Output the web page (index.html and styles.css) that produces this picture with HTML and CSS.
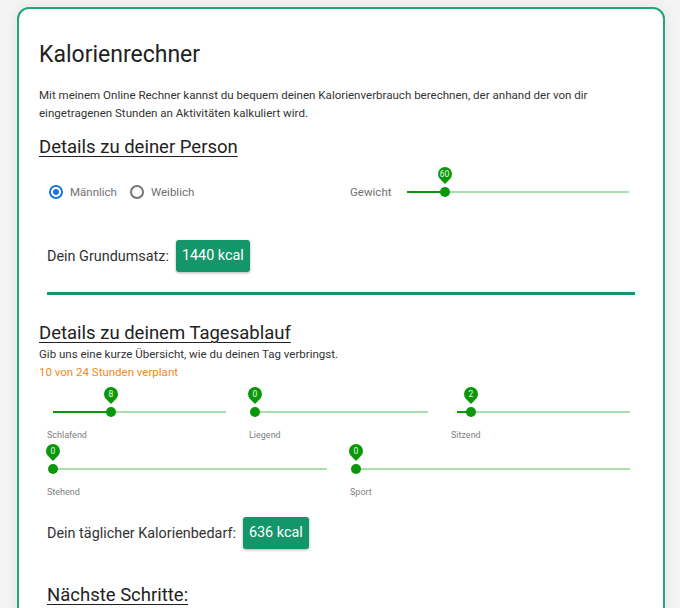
FILE: index.html
```html
<!DOCTYPE html>
<html lang="de">
<head>
    <meta charset="UTF-8">
    <meta name="viewport" content="width=device-width, initial-scale=1.0">
    <title>Kalorienrechner</title>
    <link rel="stylesheet" href="styles.css">
</head>
<body>
    <main class="calc-card">
        <h1 class="calc-title">Kalorienrechner</h1>
        <p class="intro">Mit meinem Online Rechner kannst du bequem deinen Kalorienverbrauch berechnen, der anhand der von dir eingetragenen Stunden an Aktivitäten kalkuliert wird.</p>

        <h2 class="section-title">Details zu deiner Person</h2>
        <div class="person-row">
            <div class="half radios">
                <label class="radio-option">
                    <span class="radio checked"></span>
                    <span class="radio-label">Männlich</span>
                </label>
                <label class="radio-option">
                    <span class="radio"></span>
                    <span class="radio-label">Weiblich</span>
                </label>
            </div>
            <div class="half weight">
                <span class="field-label">Gewicht</span>
                <div class="slider inline" style="--v: 17.5%">
                    <div class="track"></div>
                    <div class="fill"></div>
                    <div class="thumb"><span class="bubble"><span>60</span></span></div>
                </div>
            </div>
        </div>

        <div class="result-row">
            <span class="result-text">Dein Grundumsatz:</span>
            <span class="badge">1440 kcal</span>
        </div>

        <div class="divider"></div>

        <h2 class="section-title day-title">Details zu deinem Tagesablauf</h2>
        <p class="sub">Gib uns eine kurze Übersicht, wie du deinen Tag verbringst.</p>
        <p class="sub planned">10 von 24 Stunden verplant</p>

        <div class="activity-grid thirds">
            <div class="activity">
                <div class="slider" style="--v: 33.33%">
                    <div class="track"></div>
                    <div class="fill"></div>
                    <div class="thumb"><span class="bubble"><span>8</span></span></div>
                </div>
                <div class="activity-label">Schlafend</div>
            </div>
            <div class="activity">
                <div class="slider" style="--v: 0%">
                    <div class="track"></div>
                    <div class="fill"></div>
                    <div class="thumb"><span class="bubble"><span>0</span></span></div>
                </div>
                <div class="activity-label">Liegend</div>
            </div>
            <div class="activity">
                <div class="slider" style="--v: 8.33%">
                    <div class="track"></div>
                    <div class="fill"></div>
                    <div class="thumb"><span class="bubble"><span>2</span></span></div>
                </div>
                <div class="activity-label">Sitzend</div>
            </div>
        </div>
        <div class="activity-grid halves">
            <div class="activity">
                <div class="slider" style="--v: 0%">
                    <div class="track"></div>
                    <div class="fill"></div>
                    <div class="thumb"><span class="bubble"><span>0</span></span></div>
                </div>
                <div class="activity-label">Stehend</div>
            </div>
            <div class="activity">
                <div class="slider" style="--v: 0%">
                    <div class="track"></div>
                    <div class="fill"></div>
                    <div class="thumb"><span class="bubble"><span>0</span></span></div>
                </div>
                <div class="activity-label">Sport</div>
            </div>
        </div>

        <div class="result-row daily">
            <span class="result-text">Dein täglicher Kalorienbedarf:</span>
            <span class="badge">636 kcal</span>
        </div>

        <h2 class="section-title next-title">Nächste Schritte:</h2>
    </main>
</body>
</html>
```

FILE: styles.css
```css
/* Kalorienrechner card */
* {
    margin: 0;
    padding: 0;
    box-sizing: border-box;
}

body {
    font-family: Roboto, "Noto Sans", Arial, sans-serif;
    background-color: #f4f4f4;
    color: #333333;
    padding: 7px 0 0 17px;
}

.calc-card {
    width: 648px;
    min-height: 700px;
    background-color: #ffffff;
    border: 2px solid #25a474;
    border-radius: 12px;
    padding: 30px 10px 40px 20px;
    box-shadow: 0 0 14px rgba(0, 0, 0, 0.08);
}

.calc-title {
    font-size: 23px;
    font-weight: 400;
    line-height: 32px;
    color: #222222;
}

.intro {
    margin-top: 15px;
    font-size: 11.55px;
    line-height: 18px;
    color: #333333;
}

.section-title {
    margin-top: 13px;
    font-size: 18.5px;
    font-weight: 400;
    line-height: 24px;
    color: #222222;
    text-decoration: underline;
    text-decoration-thickness: 1px;
    text-underline-offset: 3px;
}

/* Person details */
.person-row {
    display: flex;
    height: 40px;
    margin: 13px 0 0 8px;
    width: 606px;
}

.half {
    flex: 0 0 50%;
    display: flex;
    align-items: center;
}

.radio-option {
    display: flex;
    align-items: center;
    margin-right: 11px;
}

.radio {
    width: 14px;
    height: 14px;
    margin-left: 2px;
    border: 2px solid #757575;
    border-radius: 50%;
    position: relative;
}

.radio.checked {
    border-color: #1f74d6;
}

.radio.checked::after {
    content: '';
    position: absolute;
    top: 2px;
    left: 2px;
    width: 6px;
    height: 6px;
    border-radius: 50%;
    background-color: #1f74d6;
}

.radio-label,
.field-label {
    margin-left: 7px;
    font-size: 11.5px;
    color: #707070;
}

.field-label {
    margin-left: 0;
    margin-right: 15px;
}

.weight .slider {
    flex: 1;
    margin: 0 24px 0 0;
}

/* Sliders */
.slider {
    position: relative;
    height: 40px;
    margin: 0 23px 0 6px;
}

.slider.inline {
    height: 24px;
}

.track,
.fill {
    position: absolute;
    left: 0;
    top: calc(100% - 13px);
    height: 2px;
}

.track {
    right: 0;
    background-color: #a9dfa9;
}

.fill {
    width: var(--v);
    background-color: #0a980a;
}

.thumb {
    position: absolute;
    left: var(--v);
    top: calc(100% - 12px);
    width: 10px;
    height: 10px;
    margin: -5px 0 0 -5px;
    border-radius: 50%;
    background-color: #0a980a;
}

.bubble {
    position: absolute;
    left: -2px;
    top: -20px;
    width: 14px;
    height: 14px;
    border-radius: 50% 50% 0 50%;
    background-color: #0a980a;
    transform: rotate(45deg);
    display: flex;
    align-items: center;
    justify-content: center;
}

.bubble span {
    transform: rotate(-45deg);
    font-size: 8.5px;
    line-height: 9px;
    color: #e8f6e8;
}

/* Results */
.result-row {
    display: flex;
    align-items: center;
    margin: 28px 0 0 8px;
}

.result-text {
    font-size: 14.4px;
    color: #333333;
    margin-right: 7px;
}

.badge {
    display: inline-block;
    padding: 6px 6px;
    font-size: 14.4px;
    line-height: 20px;
    color: #ffffff;
    background-color: #15956a;
    border-radius: 3px;
    box-shadow: 0 1px 3px rgba(0, 0, 0, 0.3);
}

.divider {
    width: 588px;
    height: 3px;
    margin: 20px 0 0 8px;
    background-color: #18966b;
}

/* Daily activities */
.day-title {
    margin-top: 26px;
}

.sub {
    font-size: 11.5px;
    line-height: 18px;
    color: #333333;
}

.planned {
    color: #ef8a22;
}

.activity-grid {
    display: grid;
    width: 606px;
    margin-left: 8px;
}

.activity-grid.thirds {
    grid-template-columns: repeat(3, 1fr);
    margin-top: 3px;
}

.activity-grid.halves {
    grid-template-columns: repeat(2, 1fr);
}

.activity {
    height: 57px;
}

.activity-label {
    margin-top: 5px;
    font-size: 9px;
    line-height: 12px;
    color: #808080;
}

.result-row.daily {
    margin-top: 19px;
}

.next-title {
    margin: 34px 0 0 8px;
}
```
